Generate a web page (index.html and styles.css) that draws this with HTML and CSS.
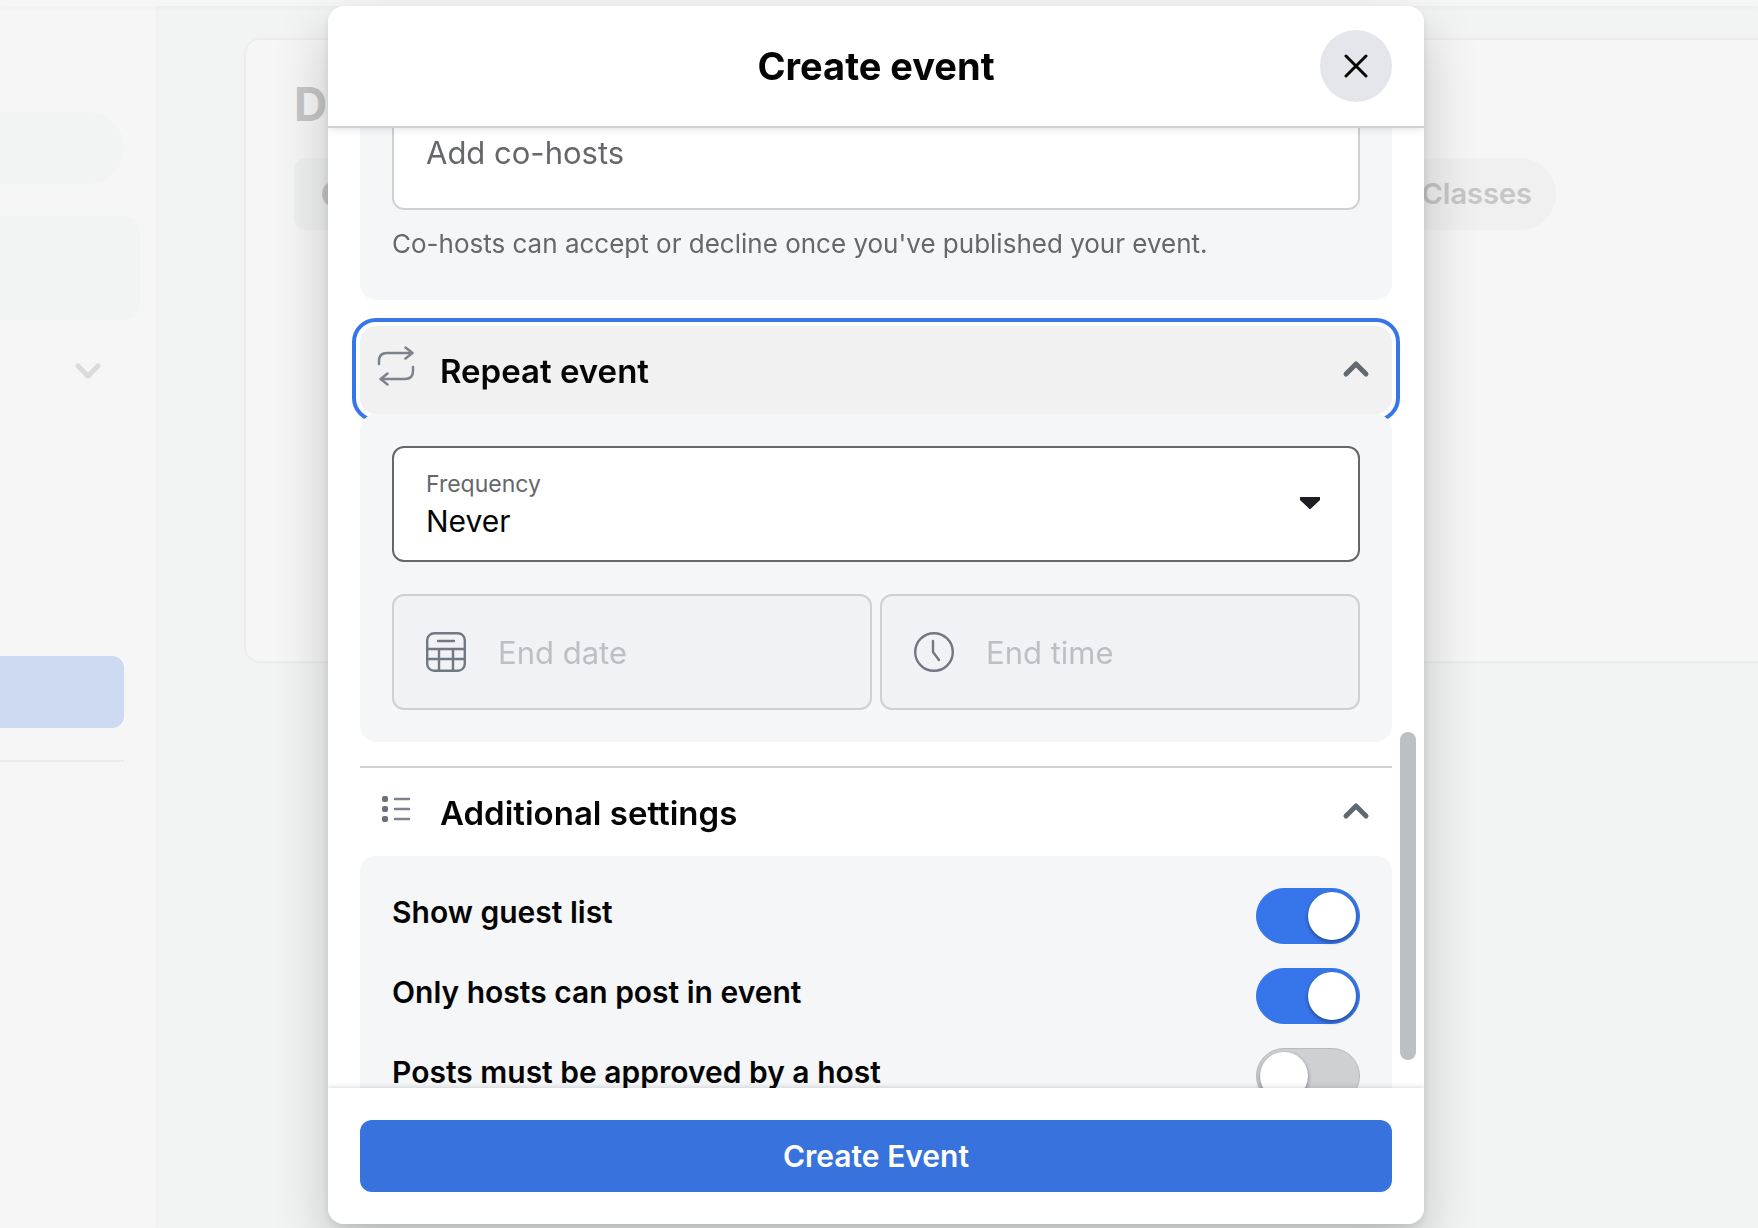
FILE: index.html
```html
<!DOCTYPE html>
<html lang="en">
<head>
  <meta charset="UTF-8">
  <meta name="viewport" content="width=device-width, initial-scale=1.0">
  <title>Create event</title>
  <link rel="stylesheet" href="styles.css">
</head>
<body>
  <div class="page">
    <header class="topbar"></header>
    <div class="page-row">
      <aside class="sidebar">
        <div class="side-search"></div>
        <div class="side-item"></div>
        <svg class="side-chevron" viewBox="0 0 40 40"><path d="M10 16l10 10 10-10"/></svg>
        <div class="side-button"></div>
        <hr class="side-line">
      </aside>
      <main class="content">
        <section class="card">
          <h1>D</h1>
          <div class="chips">
            <div class="chip chip-location"><span class="pin"></span></div>
            <div class="chip">Classes</div>
          </div>
        </section>
      </main>
    </div>
  </div>

  <div class="overlay">
    <form class="modal" role="dialog" aria-labelledby="modal-title">
      <header class="modal-header">
        <h2 id="modal-title">Create event</h2>
        <button type="button" class="close" aria-label="Close">
          <svg viewBox="0 0 24 24"><path d="M2 2l20 20M22 2L2 22"/></svg>
        </button>
      </header>

      <div class="modal-body">
        <div class="panel panel-cohosts">
          <input class="text-field" type="text" placeholder="Add co-hosts" aria-label="Add co-hosts">
          <p class="hint">Co-hosts can accept or decline once you've published your event.</p>
        </div>

        <section class="section section-focused">
          <button type="button" class="section-toggle" aria-expanded="true">
            <svg class="section-icon" viewBox="0 0 40 40"><path d="M3 18v-3q0-8 8-8h25M29.500 1.500l7 5.500-7 5.500M37 21v4q0 8-8 8H5M11.500 27.500l-7 5.500 7 5.500"/></svg>
            <span class="section-title">Repeat event</span>
            <svg class="chevron" viewBox="0 0 40 40"><path d="M10 24l10-10 10 10"/></svg>
          </button>
          <div class="panel">
            <div class="field select-field">
              <label for="frequency">Frequency</label>
              <select id="frequency">
                <option>Never</option>
              </select>
              <svg class="caret" viewBox="0 0 20 12"><path d="M0 0h20v3l-9 8.500q-1 1-2 0L0 3z"/></svg>
            </div>
            <div class="field-row">
              <label class="field field-disabled">
                <svg class="field-icon" viewBox="0 0 40 40"><rect x="1.200" y="1.200" width="37.600" height="37.600" rx="7"/><path d="M12 9h16M2 17h36M2 27h36M13 17v21M27 17v21"/></svg>
                <input type="text" placeholder="End date" aria-label="End date" disabled>
              </label>
              <label class="field field-disabled">
                <svg class="field-icon" viewBox="0 0 40 40"><circle cx="20" cy="20" r="18.800"/><path d="M19 9v11l6 8"/></svg>
                <input type="text" placeholder="End time" aria-label="End time" disabled>
              </label>
            </div>
          </div>
        </section>

        <section class="section">
          <button type="button" class="section-toggle" aria-expanded="true">
            <svg class="section-icon" viewBox="0 0 40 40"><path d="M19 11h14M19 21h14M19 31h14"/><g class="dots"><rect x="6" y="8" width="6" height="6" rx="2"/><rect x="6" y="18" width="6" height="6" rx="2"/><rect x="6" y="28" width="6" height="6" rx="2"/></g></svg>
            <span class="section-title">Additional settings</span>
            <svg class="chevron" viewBox="0 0 40 40"><path d="M10 24l10-10 10 10"/></svg>
          </button>
          <div class="panel settings">
            <label class="setting">
              <span>Show guest list</span>
              <input type="checkbox" class="switch" checked>
            </label>
            <label class="setting">
              <span>Only hosts can post in event</span>
              <input type="checkbox" class="switch" checked>
            </label>
            <label class="setting">
              <span>Posts must be approved by a host</span>
              <input type="checkbox" class="switch">
            </label>
          </div>
        </section>
        <div class="scroll-thumb"></div>
      </div>

      <footer class="modal-footer">
        <button type="submit" class="submit">Create Event</button>
      </footer>
    </form>
  </div>
</body>
</html>
```
FILE: styles.css
```css
* {
  box-sizing: border-box;
}
body {
  margin: 0;
  font-family: Inter, "Liberation Sans", sans-serif;
  font-size: 30px;
  color: #050505;
  overflow: hidden;
}
button, input, select {
  font: inherit;
  color: inherit;
}
h1, h2, p {
  margin: 0;
}
svg {
  display: block;
  fill: none;
  stroke-linecap: round;
  stroke-linejoin: round;
}

/* page behind the dialog */
.page {
  display: flex;
  flex-direction: column;
  height: 100vh;
  background: #f2f4f4;
}
.topbar {
  height: 6px;
  background: #f6f6f6;
  box-shadow: 0 1px 6px rgba(0, 0, 0, 0.04);
  z-index: 1;
}
.page-row {
  display: flex;
  flex: 1;
}
.sidebar {
  display: flex;
  flex-direction: column;
  width: 156px;
  padding-top: 106px;
  background: #f6f6f6;
  box-shadow: 1px 0 2px rgba(0, 0, 0, 0.02);
}
.side-search {
  width: 124px;
  height: 72px;
  border-radius: 0 36px 36px 0;
  background: #f2f4f4;
}
.side-item {
  width: 140px;
  height: 104px;
  margin-top: 32px;
  border-radius: 0 16px 16px 0;
  background: #f2f4f4;
}
.side-chevron {
  width: 40px;
  height: 40px;
  margin: 30px 0 0 68px;
  stroke: #d9dbdc;
  stroke-width: 5;
}
.side-button {
  width: 124px;
  height: 72px;
  margin-top: 266px;
  border-radius: 0 12px 12px 0;
  background: #cddaf1;
}
.side-line {
  width: 124px;
  margin: 32px 0 0;
  border: 0;
  border-top: 2px solid #ececec;
}
.content {
  flex: 1;
  padding: 32px 0 0 88px;
}
.card {
  min-height: 625px;
  padding: 36px 202px 0 48px;
  border: 2px solid #ececec;
  border-right: 0;
  border-radius: 16px 0 0 16px;
  background: #f6f6f6;
}
.card h1 {
  font-size: 46px;
  line-height: 56px;
  color: #c6c6c6;
}
.chips {
  display: flex;
  justify-content: space-between;
  margin-top: 26px;
}
.chip {
  height: 72px;
  padding: 0 24px;
  border-radius: 36px;
  background: #f0f0f0;
  color: #c6c6c6;
  font-size: 29px;
  font-weight: 600;
  line-height: 72px;
}
.chip-location {
  display: flex;
  align-items: center;
  width: 160px;
  padding: 0 28px;
  border-radius: 12px;
  background: #eff1f1;
}
.pin {
  width: 26px;
  height: 26px;
  border-radius: 50%;
  background: #c6c6c6;
}

/* dialog */
.overlay {
  position: fixed;
  inset: 0;
  z-index: 2;
  display: flex;
  justify-content: center;
  padding: 6px 6px 4px 0;
}
.modal {
  display: flex;
  flex-direction: column;
  width: 100%;
  max-width: 1096px;
  border-radius: 16px;
  background: #fff;
  box-shadow: 0 24px 56px rgba(0, 0, 0, 0.2), 0 4px 8px rgba(0, 0, 0, 0.1);
  overflow: hidden;
}
.modal-header {
  position: relative;
  z-index: 3;
  display: grid;
  grid-template-columns: 72px 1fr 72px;
  align-items: center;
  padding: 24px 32px;
  border-bottom: 2px solid #ced0d4;
  box-shadow: 0 2px 8px rgba(0, 0, 0, 0.1);
}
.modal-header h2 {
  grid-column: 2;
  font-size: 38px;
  font-weight: 700;
  line-height: 48px;
  text-align: center;
}
.close {
  display: flex;
  align-items: center;
  justify-content: center;
  width: 72px;
  height: 72px;
  padding: 0;
  border: 0;
  border-radius: 50%;
  background: #e4e6eb;
}
.close svg {
  width: 24px;
  height: 24px;
  stroke: #050505;
  stroke-width: 3;
}
.modal-body {
  position: relative;
  flex: 1;
  min-height: 0;
  padding: 0 32px;
  overflow: hidden;
}
.panel {
  position: relative;
  z-index: 1;
  padding: 32px;
  border-radius: 16px;
  background: #f5f6f8;
}
/* scrolled part way under the header */
.panel-cohosts {
  margin-top: -66px;
  padding-bottom: 40px;
}
.text-field {
  display: block;
  width: 100%;
  height: 116px;
  padding: 30px 32px;
  border: 2px solid #ced0d4;
  border-radius: 12px;
  background: #fff;
  font-size: 31px;
}
.text-field::placeholder {
  color: #65676b;
  opacity: 1;
}
.hint {
  margin-top: 18px;
  font-size: 26px;
  line-height: 32px;
  color: #65676b;
}
.section {
  margin-top: 24px;
  border-top: 2px solid #ced0d4;
}
.section-focused {
  border-color: transparent;
}
.section-toggle {
  display: flex;
  align-items: flex-start;
  gap: 24px;
  width: 100%;
  height: 88px;
  padding: 20px 16px;
  border: 0;
  border-radius: 16px;
  background: none;
  text-align: left;
}
.section-focused .section-toggle {
  background: #f1f1f1;
  outline: 4px solid #3776ea;
  outline-offset: 4px;
}
.section-icon {
  width: 40px;
  height: 40px;
  stroke: #7d838c;
  stroke-width: 2.5;
}
.dots {
  fill: #6b717b;
  stroke: none;
}
.section-title {
  flex: 1;
  font-size: 33px;
  font-weight: 600;
  line-height: 50px;
}
.chevron {
  width: 40px;
  height: 48px;
  stroke: #626972;
  stroke-width: 5;
}
.field {
  position: relative;
  height: 116px;
  padding: 0 32px;
  border: 2px solid #ced0d4;
  border-radius: 12px;
  background: #fff;
}
.select-field {
  display: flex;
  flex-direction: column;
  justify-content: center;
  border-color: #65676b;
}
.select-field label {
  font-size: 23px;
  line-height: 34px;
  color: #65676b;
}
.select-field select {
  width: 100%;
  height: 40px;
  padding: 0;
  border: 0;
  appearance: none;
  background: none;
  line-height: 40px;
}
.caret {
  position: absolute;
  top: 49px;
  right: 38px;
  width: 20px;
  height: 12px;
  fill: #1c1e21;
}
.field-row {
  display: flex;
  gap: 8px;
  margin-top: 32px;
}
.field-disabled {
  display: flex;
  flex: 1;
  align-items: center;
  gap: 32px;
  min-width: 0;
  background: #f0f2f5;
}
.field-disabled input {
  flex: 1;
  min-width: 0;
  padding: 0;
  border: 0;
  background: none;
  font-size: 31px;
}
.field-disabled input::placeholder {
  color: #bcc0c4;
  opacity: 1;
}
.field-icon {
  flex: none;
  width: 40px;
  height: 40px;
  stroke: #717882;
  stroke-width: 2.4;
}
.settings {
  display: flex;
  flex-direction: column;
  gap: 24px;
}
.setting {
  display: flex;
  justify-content: space-between;
  height: 56px;
  font-weight: 600;
  line-height: 48px;
}
.switch {
  width: 104px;
  height: 56px;
  margin: 0;
  padding: 3px;
  border: 1px solid #b9bbbf;
  border-radius: 28px;
  appearance: none;
  background: #ced0d4;
}
.switch::before {
  content: "";
  display: block;
  width: 48px;
  height: 48px;
  border-radius: 50%;
  background: #fff;
  box-shadow: 0 2px 4px rgba(0, 0, 0, 0.4);
}
.switch:checked {
  border-color: #3776ea;
  background: #3776ea;
}
.switch:checked::before {
  margin-left: auto;
}
.scroll-thumb {
  position: absolute;
  top: 604px;
  right: 8px;
  z-index: 2;
  width: 16px;
  height: 328px;
  border-radius: 8px;
  background: #bcc0c4;
}
.modal-footer {
  position: relative;
  z-index: 3;
  padding: 32px;
  background: #fff;
  box-shadow: 0 0 6px rgba(0, 0, 0, 0.2);
}
.submit {
  display: block;
  width: 100%;
  height: 72px;
  border: 0;
  border-radius: 12px;
  background: #3872dd;
  color: #fff;
  font-weight: 600;
}
```
